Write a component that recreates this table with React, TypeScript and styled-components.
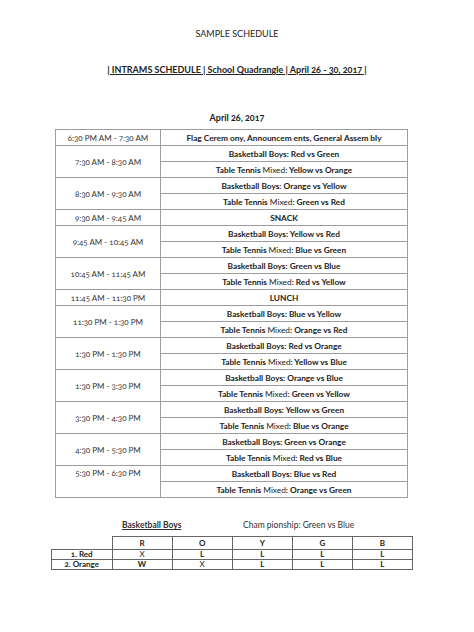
import React from 'react';
import styled, { createGlobalStyle } from 'styled-components';

const GlobalStyle = createGlobalStyle`
  html, body {
    margin: 0;
    padding: 0;
    background: #fff;
  }
  body {
    font-family: Lato, "Liberation Sans", sans-serif;
    color: #222;
    font-variant-numeric: oldstyle-nums;
  }
`;

const Page = styled.div`
  width: 474px;
  height: 632px;
  padding-top: 28px;
  box-sizing: border-box;
  overflow: hidden;
`;

const Title = styled.div`
  text-align: center;
  font-size: 9px;
  line-height: 12px;
  color: #222;
`;

const Heading = styled.div`
  margin-top: 24px;
  text-align: center;
  font-size: 9px;
  line-height: 12px;
  font-weight: 700;
  text-decoration: underline;
`;

const DateLine = styled.div`
  margin-top: 36px;
  text-align: center;
  font-size: 9px;
  line-height: 12px;
  font-weight: 700;
`;

const ScheduleTable = styled.table`
  margin: 5px 0 0 55px;
  border-collapse: collapse;
  table-layout: fixed;
  width: 353px;
`;

const TimeCell = styled.td<{ $top?: boolean }>`
  width: 104px;
  border: 1px solid #9c9c9c;
  text-align: center;
  vertical-align: ${(p) => (p.$top ? 'top' : 'middle')};
  padding: ${(p) => (p.$top ? '2px 0 0' : '0')};
  font-size: 8px;
  color: #333;
  white-space: nowrap;
`;

const EventCell = styled.td`
  height: 15px;
  padding: 0;
  border: 1px solid #9c9c9c;
  text-align: center;
  font-size: 8.3px;
  font-weight: 700;
  white-space: nowrap;
`;

const Light = styled.span`
  font-weight: 400;
`;

const SectionRow = styled.div`
  display: flex;
  margin-top: 21px;
  padding-left: 122px;
  font-size: 8.5px;
  line-height: 12px;
`;

const SectionTitle = styled.span`
  width: 121px;
  font-weight: 700;
  text-decoration: underline;
  color: #333;
`;

const SectionNote = styled.span`
  color: #333;
`;

const StandingsTable = styled.table`
  margin: 5px 0 0 51px;
  border-collapse: collapse;
  table-layout: fixed;
  width: 362px;
`;

const LabelCell = styled.td<{ $empty?: boolean }>`
  width: 60px;
  padding: 0;
  height: 9px;
  border: ${(p) => (p.$empty ? 'none' : '1px solid #666')};
  font-size: 8px;
  font-weight: 700;
  text-align: center;
  line-height: 9px;
`;

const MarkCell = styled.td<{ $head?: boolean; $light?: boolean }>`
  padding: 0;
  height: ${(p) => (p.$head ? '12px' : '9px')};
  border: 1px solid #666;
  font-size: 8px;
  line-height: 9px;
  font-weight: ${(p) => (p.$light ? 400 : 700)};
  text-align: center;
`;

type Slot = { time: string; events: string[]; top?: boolean };

const schedule: Slot[] = [
  { time: '6:30 PM AM - 7:30 AM', events: ['Flag Cerem ony, Announcem ents, General Assem bly'] },
  { time: '7:30 AM - 8:30 AM', events: ['Basketball Boys: Red vs Green', 'Table Tennis Mixed: Yellow vs Orange'] },
  { time: '8:30 AM - 9:30 AM', events: ['Basketball Boys: Orange vs Yellow', 'Table Tennis Mixed: Green vs Red'] },
  { time: '9:30 AM - 9:45 AM', events: ['SNACK'] },
  { time: '9:45 AM - 10:45 AM', events: ['Basketball Boys: Yellow vs Red', 'Table Tennis Mixed: Blue vs Green'] },
  { time: '10:45 AM - 11:45 AM', events: ['Basketball Boys: Green vs Blue', 'Table Tennis Mixed: Red vs Yellow'] },
  { time: '11:45 AM - 11:30 PM', events: ['LUNCH'] },
  { time: '11:30 PM - 1:30 PM', events: ['Basketball Boys: Blue vs Yellow', 'Table Tennis Mixed: Orange vs Red'] },
  { time: '1:30 PM - 1:30 PM', events: ['Basketball Boys: Red vs Orange', 'Table Tennis Mixed: Yellow vs Blue'] },
  { time: '1:30 PM - 3:30 PM', events: ['Basketball Boys: Orange vs Blue', 'Table Tennis Mixed: Green vs Yellow'] },
  { time: '3:30 PM - 4:30 PM', events: ['Basketball Boys: Yellow vs Green', 'Table Tennis Mixed: Blue vs Orange'] },
  { time: '4:30 PM - 5:30 PM', events: ['Basketball Boys: Green vs Orange', 'Table Tennis Mixed: Red vs Blue'] },
  { time: '5:30 PM - 6:30 PM', events: ['Basketball Boys: Blue vs Red', 'Table Tennis Mixed: Orange vs Green'], top: true },
];

const teams = ['R', 'O', 'Y', 'G', 'B'];
const standings = [
  { name: '1. Red', marks: ['X', 'L', 'L', 'L', 'L'] },
  { name: '2. Orange', marks: ['W', 'X', 'L', 'L', 'L'] },
];

// "Mixed" is set lighter than the rest of the line in the source
const EventText = ({ text }: { text: string }) => {
  const parts = text.split('Mixed');
  if (parts.length === 1) return <>{text}</>;
  return (
    <>
      {parts[0]}
      <Light>Mixed</Light>
      {parts[1]}
    </>
  );
};

const App = () => {
  return (
    <Page>
      <GlobalStyle />
      <Title>SAMPLE SCHEDULE</Title>
      <Heading>| INTRAMS SCHEDULE | School Quadrangle | April 26 - 30, 2017 |</Heading>
      <DateLine>April 26, 2017</DateLine>

      <ScheduleTable>
        <tbody>
          {schedule.map((slot) =>
            slot.events.map((ev, i) => (
              <tr key={slot.time + i}>
                {i === 0 && (
                  <TimeCell rowSpan={slot.events.length} $top={slot.top}>
                    {slot.time}
                  </TimeCell>
                )}
                <EventCell>
                  <EventText text={ev} />
                </EventCell>
              </tr>
            ))
          )}
        </tbody>
      </ScheduleTable>

      <SectionRow>
        <SectionTitle>Basketball Boys </SectionTitle>
        <SectionNote>Cham pionship: Green vs Blue</SectionNote>
      </SectionRow>

      <StandingsTable>
        <tbody>
          <tr>
            <LabelCell $empty />
            {teams.map((t) => (
              <MarkCell key={t} $head>
                {t}
              </MarkCell>
            ))}
          </tr>
          {standings.map((row) => (
            <tr key={row.name}>
              <LabelCell>{row.name}</LabelCell>
              {row.marks.map((m, i) => (
                <MarkCell key={i} $light={m === 'X'}>
                  {m}
                </MarkCell>
              ))}
            </tr>
          ))}
        </tbody>
      </StandingsTable>
    </Page>
  );
};

export default App;
